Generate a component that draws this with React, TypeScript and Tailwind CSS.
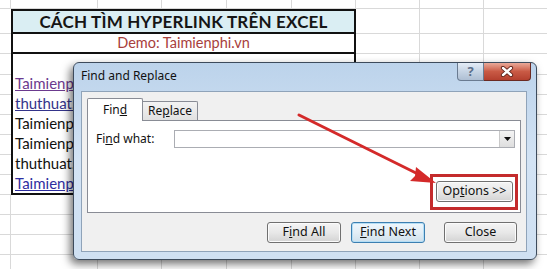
import type { ReactNode } from 'react';

const grid = 'border-[#d9d9d9]';

// column widths of the sheet (A..I), the table covers B..F
const COLS = [11, 87, 64, 65, 65, 64, 64, 64];

function SheetRow({ h }: { h: number }) {
  return (
    <div className="flex" style={{ height: h }}>
      {COLS.map((w, i) => (
        <div key={i} className={`shrink-0 border-r border-b ${grid}`} style={{ width: w }} />
      ))}
      <div className={`flex-1 border-b ${grid}`} />
    </div>
  );
}

const BAND = [25, 20, 21, 20, 20, 20, 20, 20, 20];

// only the part left of the dialog is visible
const links: { text: string; cls: string }[] = [
  { text: 'Taimienp', cls: 'text-[#6b3a8e] underline' },
  { text: 'thuthuat.', cls: 'text-[#34348a] underline' },
  { text: 'Taimienp', cls: 'text-[#111]' },
  { text: 'Taimienp', cls: 'text-[#111]' },
  { text: 'thuthuat.', cls: 'text-[#111]' },
  { text: 'Taimienp', cls: 'text-[#2e2ea0] underline' },
];

function Sheet() {
  return (
    <div className="flex flex-col font-['Lato',sans-serif]">
      <SheetRow h={9} />
      <div className="flex">
        {/* column A */}
        <div className="flex flex-col w-[11px] shrink-0">
          {BAND.map((h, i) => (
            <div key={i} className={`border-b ${grid}`} style={{ height: h }} />
          ))}
        </div>
        {/* the table */}
        <div className="w-[345px] shrink-0 border-2 border-[#111] flex flex-col">
          <div className="h-[23px] bg-[#daeef3] border-b-2 border-[#111] flex items-center justify-center text-[17px] font-bold text-[#151515] tracking-[0.2px]">
            CÁCH TÌM HYPERLINK TRÊN EXCEL
          </div>
          <div className="h-[20px] border-b-2 border-[#111] flex items-center justify-center text-[14.5px] text-[#a8403c]">
            Demo: Taimienphi.vn
          </div>
          <div className="h-[19px]" />
          {links.map((l, i) => (
            <div key={i} className={`h-[20px] pl-[2px] flex items-center whitespace-nowrap text-[15px] leading-[19px] ${l.cls}`}>
              {l.text}
            </div>
          ))}
        </div>
        {/* columns G..I */}
        <div className="flex flex-col flex-1">
          {BAND.map((h, i) => (
            <div key={i} className="flex" style={{ height: h }}>
              <div className={`w-[64px] border-r border-b ${grid}`} />
              <div className={`w-[64px] border-r border-b ${grid}`} />
              <div className={`flex-1 border-b ${grid}`} />
            </div>
          ))}
        </div>
      </div>
      <SheetRow h={20} />
      <SheetRow h={20} />
      <SheetRow h={20} />
      <SheetRow h={20} />
    </div>
  );
}

function WinButton({ children, def = false, className = '' }: { children: ReactNode; def?: boolean; className?: string }) {
  return (
    <div
      className={`h-[21px] rounded-[3px] border flex items-center justify-center text-[12.5px] text-[#111] bg-gradient-to-b ${
        def
          ? 'border-[#3c7fb1] from-[#eef7fd] via-[#e3eef6] to-[#cfe0ec] shadow-[inset_0_0_0_1px_#b5def5]'
          : 'border-[#707070] from-[#f4f4f4] via-[#e8e8e8] to-[#d3d3d3] shadow-[inset_0_0_0_1px_#fbfbfb]'
      } ${className}`}
    >
      {children}
    </div>
  );
}

function Dialog() {
  return (
    <div className="absolute left-[73px] top-[62px] w-[464px] h-[198px] rounded-[6px] border border-[#3d4b5c] bg-gradient-to-b from-[#bcd3eb] via-[#d3e3f4] to-[#cfe0f2] shadow-[-3px_4px_9px_rgba(0,0,0,0.55)] flex flex-col font-['Noto_Sans',sans-serif]">
      {/* title bar */}
      <div className="h-[28px] flex items-start">
        <div className="pl-[7px] pt-[4px] text-[12px] text-[#111]">Find and Replace</div>
        <div className="ml-auto mr-[5px] flex">
          <div className="w-[27px] h-[18px] rounded-bl-[4px] border border-t-0 border-[#6a7b91] bg-gradient-to-b from-[#e4ecf6] via-[#c6d4e4] to-[#aebfd3] flex items-center justify-center text-[13px] font-bold text-[#5b6f8a] leading-none">
            ?
          </div>
          <div className="w-[47px] h-[18px] rounded-br-[4px] border border-l-0 border-t-0 border-[#6b2a22] bg-gradient-to-b from-[#e9a999] via-[#c95a45] to-[#b4402f] flex items-center justify-center">
            <svg width="14" height="11" viewBox="0 0 14 11">
              <path d="M3 2 L11 9 M11 2 L3 9" stroke="#5a1f16" strokeWidth="4.2" strokeLinecap="round" />
              <path d="M3 2 L11 9 M11 2 L3 9" stroke="#ffffff" strokeWidth="2.4" strokeLinecap="round" />
            </svg>
          </div>
        </div>
      </div>
      {/* client area */}
      <div className="flex-1 ml-[7px] mr-[9px] mb-[7px] border border-[#8fa3b9] bg-[#f0f0f0] flex flex-col px-[5px] pt-[6px]">
        {/* tabs */}
        <div className="flex items-end h-[22px]">
          <div className="relative z-10 -mb-px w-[56px] h-[23px] bg-white border border-b-0 border-[#898c95] rounded-t-[2px] flex items-center justify-center text-[12px] text-[#111]">
            Fin<span className="underline">d</span>
          </div>
          <div className="w-[55px] h-[19px] border border-l-0 border-b-0 border-[#898c95] rounded-tr-[2px] bg-gradient-to-b from-[#f3f3f3] to-[#e1e1e1] flex items-center justify-center text-[12px] text-[#111]">
            Re<span className="underline">p</span>lace
          </div>
        </div>
        {/* tab page */}
        <div className="h-[93px] bg-white border border-[#898c95] flex flex-col pl-[8px] pr-[2px] pt-[9px]">
          <div className="flex items-center mr-[3px]">
            <div className="w-[78px] text-[12px] text-[#111]">
              Fi<span className="underline">n</span>d what:
            </div>
            <div className="flex-1 h-[18px] border border-[#abadb3] bg-white flex justify-end">
              <div className="w-[15px] h-full border-l border-[#c9c9c9] bg-gradient-to-b from-[#f4f4f4] to-[#dedede] flex items-center justify-center">
                <svg width="7" height="4" viewBox="0 0 7 4">
                  <path d="M0 0 H7 L3.5 4 Z" fill="#111" />
                </svg>
              </div>
            </div>
          </div>
          <div className="flex justify-end mt-[26px]">
            <div className="border-[3px] border-[#c42b2c] pl-[3px] pr-[2px] pt-[4px] pb-[5px]">
              <WinButton className="w-[77px]">
                Op<span className="underline">t</span>ions &gt;&gt;
              </WinButton>
            </div>
          </div>
        </div>
        {/* buttons */}
        <div className="flex justify-end items-center mt-[9px] pr-[4px]">
          <WinButton className="w-[74px]">
            F<span className="underline">i</span>nd All
          </WinButton>
          <WinButton def className="w-[74px] ml-[10px]">
            <span className="underline">F</span>ind Next
          </WinButton>
          <WinButton className="w-[73px] ml-[19px]">Close</WinButton>
        </div>
      </div>
    </div>
  );
}

export default function App() {
  return (
    <div className="relative w-[547px] h-[269px] overflow-hidden bg-white">
      <Sheet />
      <Dialog />
      {/* annotation arrow */}
      <svg className="absolute inset-0 pointer-events-none" width="547" height="269" viewBox="0 0 547 269">
        <line x1="299" y1="115" x2="418" y2="174" stroke="#d42a2a" strokeWidth="3" strokeLinecap="round" />
        <path d="M436 183 L410 181 L415 176 L416 167 Z" fill="#d42a2a" />
      </svg>
    </div>
  );
}
